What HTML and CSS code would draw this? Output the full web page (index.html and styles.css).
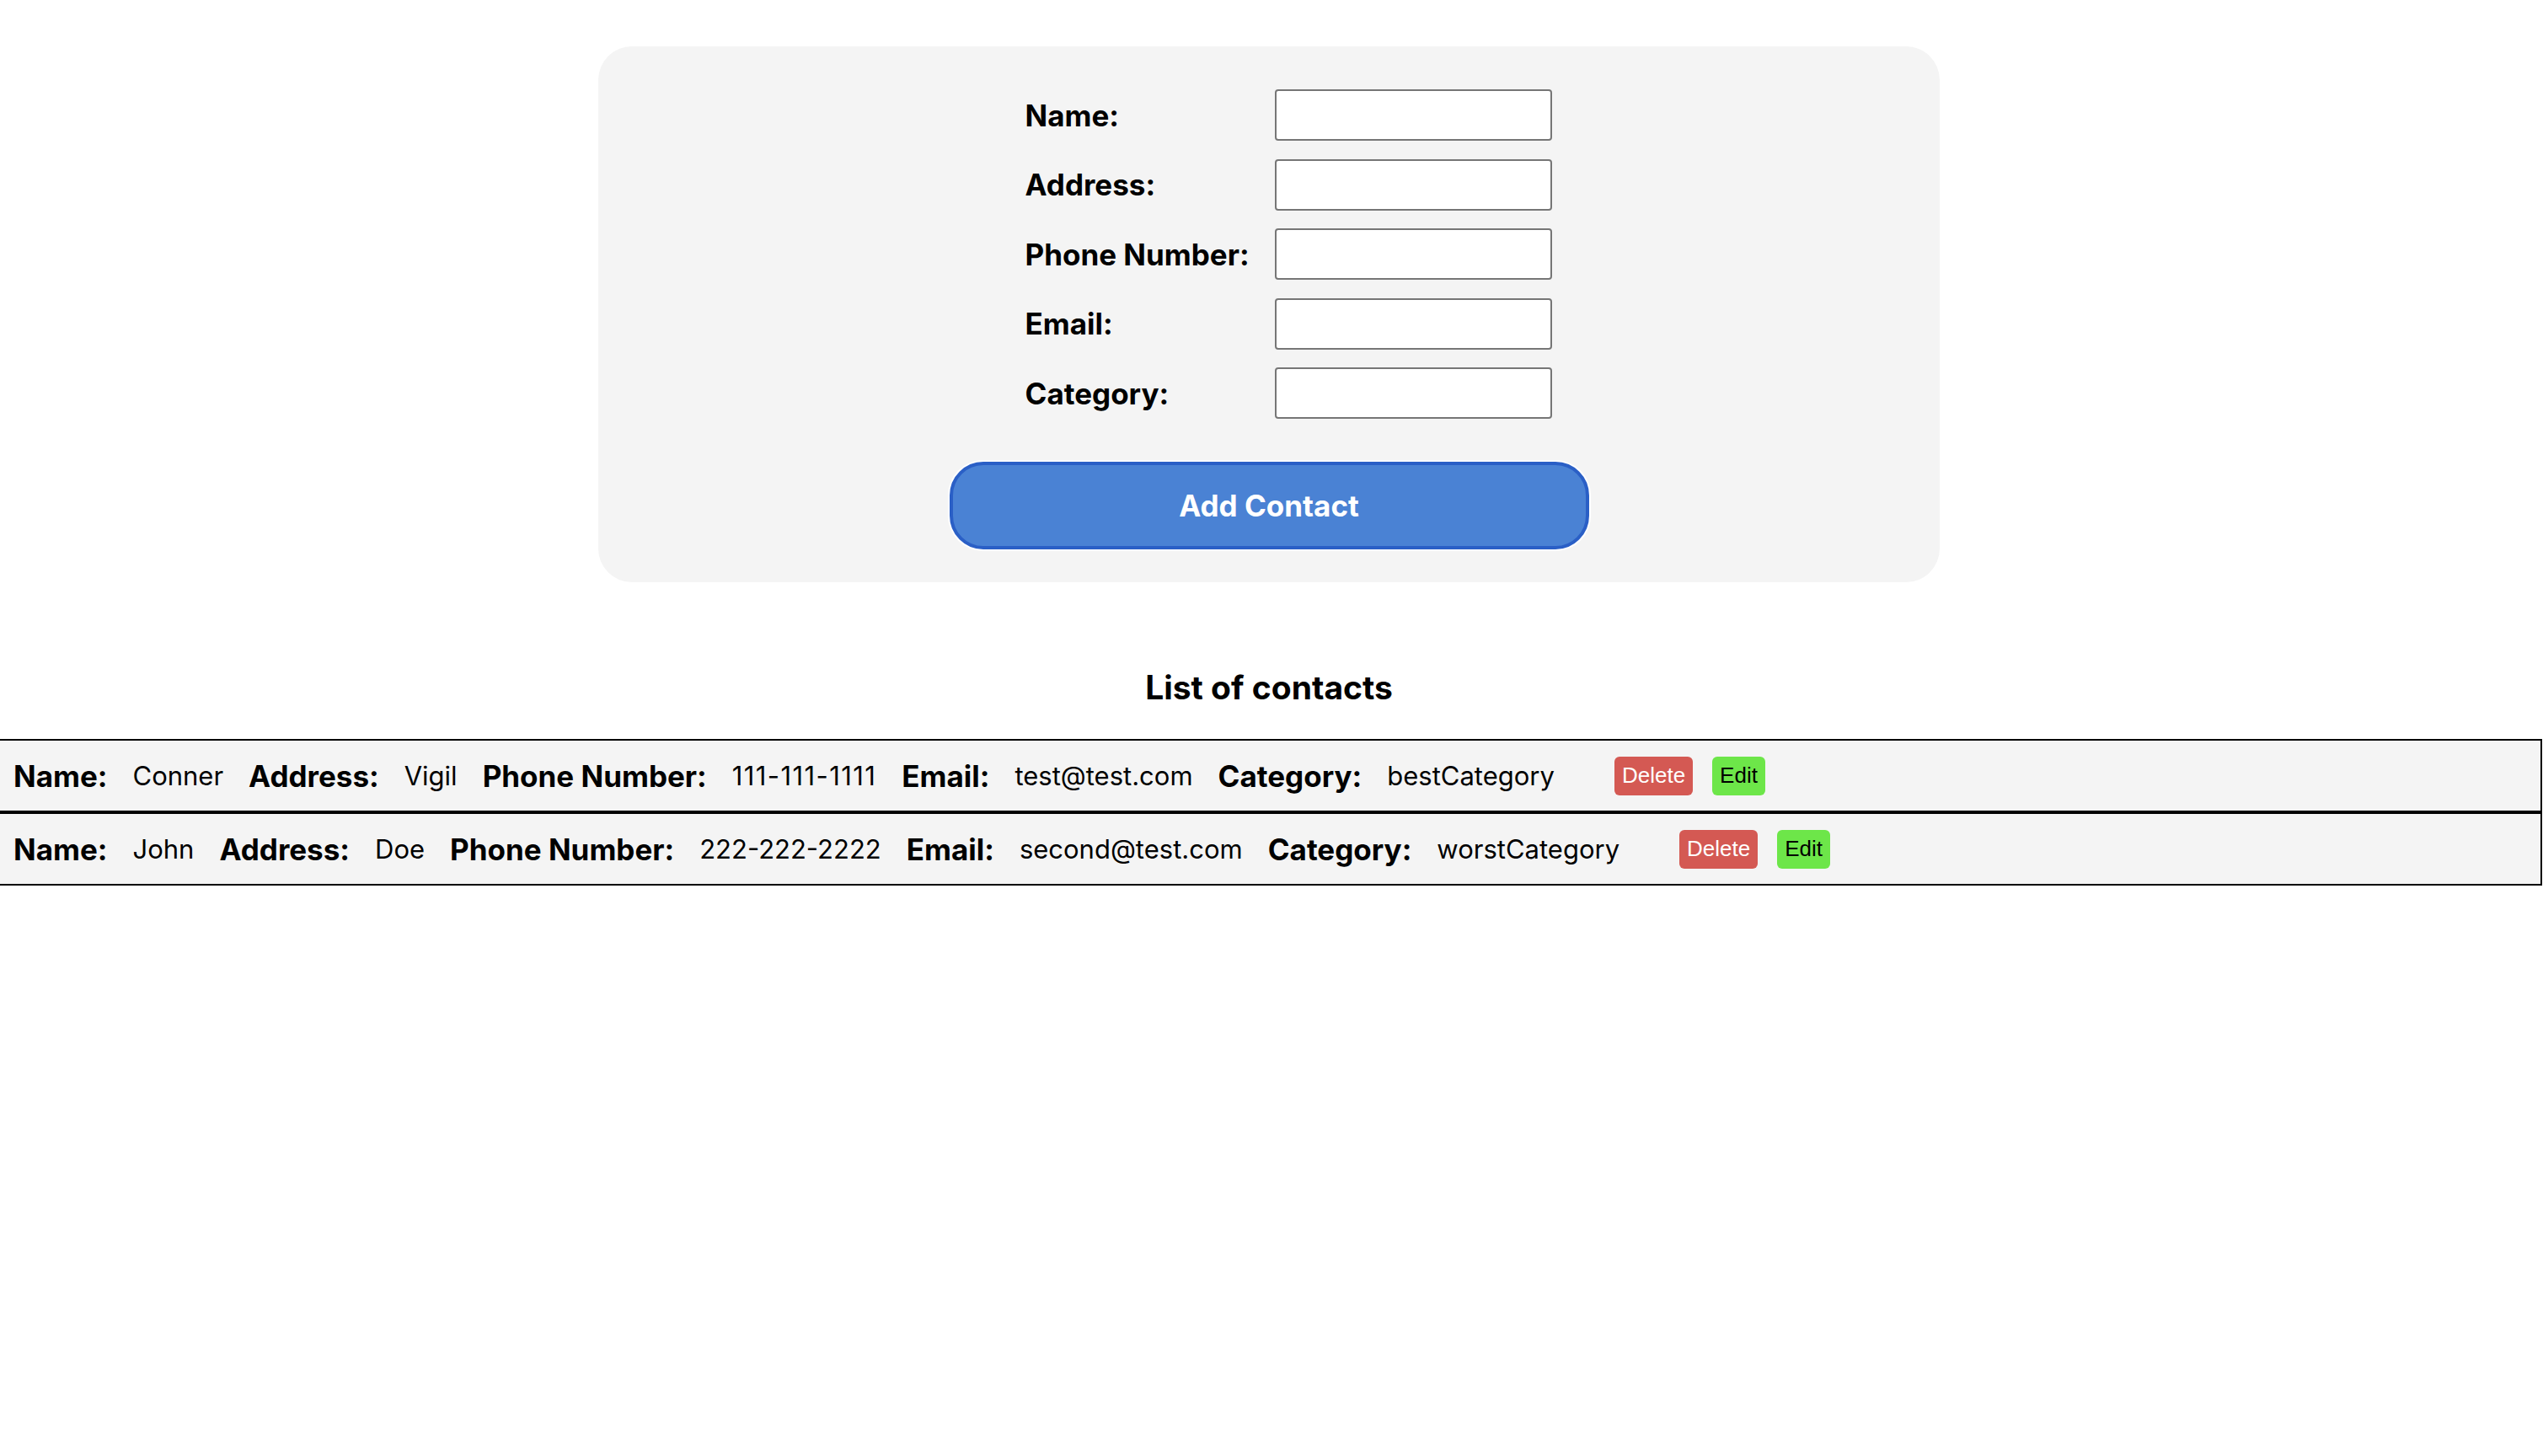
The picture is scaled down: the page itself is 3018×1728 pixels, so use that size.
FILE: index.html
```html
<!DOCTYPE html>
<html lang="en">
<head>
    <meta charset="UTF-8">
    <meta name="viewport" content="width=device-width, initial-scale=1.0">
    <title>Contacts</title>
    <link rel="stylesheet" href="styles.css">
</head>
<body>
    <form class="card" id="contactForm">
        <div class="fields">
            <label for="name">Name:</label>
            <input type="text" id="name">

            <label for="address">Address:</label>
            <input type="text" id="address">

            <label for="phone">Phone Number:</label>
            <input type="text" id="phone">

            <label for="email">Email:</label>
            <input type="text" id="email">

            <label for="category">Category:</label>
            <input type="text" id="category">
        </div>
        <button type="submit" class="add-btn">Add Contact</button>
    </form>

    <h2 class="list-title">List of contacts</h2>

    <div class="contacts">
        <div class="contact">
            <b>Name:</b><span>Conner</span>
            <b>Address:</b><span>Vigil</span>
            <b>Phone Number:</b><span class="ones">111-111-1111</span>
            <b>Email:</b><span>test@test.com</span>
            <b>Category:</b><span>bestCategory</span>
            <div class="actions">
                <button class="delete">Delete</button>
                <button class="edit">Edit</button>
            </div>
        </div>
        <div class="contact">
            <b>Name:</b><span>John</span>
            <b>Address:</b><span>Doe</span>
            <b>Phone Number:</b><span>222-222-2222</span>
            <b>Email:</b><span>second@test.com</span>
            <b>Category:</b><span>worstCategory</span>
            <div class="actions">
                <button class="delete">Delete</button>
                <button class="edit">Edit</button>
            </div>
        </div>
    </div>
</body>
</html>
```

FILE: styles.css
```css
body {
    margin: 0;
    font-family: Inter, "Noto Sans", sans-serif;
    color: #000;
    background: #fff;
}
.card {
    width: 1592px;
    height: 636px;
    box-sizing: border-box;
    margin: 55px 0 0 calc(50% - 799px);
    padding: 51px 0 0;
    background: #f4f4f4;
    border-radius: 40px;
}
.fields {
    display: grid;
    grid-template-columns: 296px 329px;
    row-gap: 21.6px;
    justify-content: center;
    padding-left: 46px;
}
.fields label {
    align-self: center;
    font-size: 35px;
    font-weight: 700;
}
.fields input {
    height: 61px;
    box-sizing: border-box;
    border: 2px solid #767676;
    border-radius: 4px;
    background: #fff;
}
.add-btn {
    display: block;
    width: 759px;
    height: 104px;
    margin: 51px auto 0;
    background: #4a82d4;
    color: #fff;
    border: 4px solid #2a5fc6;
    border-radius: 40px;
    box-shadow: 0 0 0 2px #fff;
    font-family: Inter, sans-serif;
    font-size: 35px;
    font-weight: 700;
}
.list-title {
    text-align: center;
    font-size: 39px;
    font-weight: 700;
    margin: 101px 0 38px;
    padding-right: 6px;
}
.contact {
    display: flex;
    align-items: center;
    gap: 30px;
    height: 87px;
    box-sizing: border-box;
    margin-right: 1px;
    padding-left: 16px;
    background: #f4f4f4;
    border: 2px solid #000;
    border-left: none;
}
.contact b {
    font-size: 35px;
}
.contact span {
    font-size: 31px;
}
/* Inter's "1" is narrower than the system font's */
.contact .ones {
    letter-spacing: 1.4px;
}
.actions {
    display: flex;
    gap: 23px;
    margin-left: 41px;
}
.actions button {
    height: 46px;
    padding: 0 9px;
    border: none;
    border-radius: 6px;
    font-family: "Liberation Sans", Arial, sans-serif;
    font-size: 26px;
}
.delete {
    background: #d45953;
    color: #fff;
}
.edit {
    background: #6de649;
    color: #000;
}
```
